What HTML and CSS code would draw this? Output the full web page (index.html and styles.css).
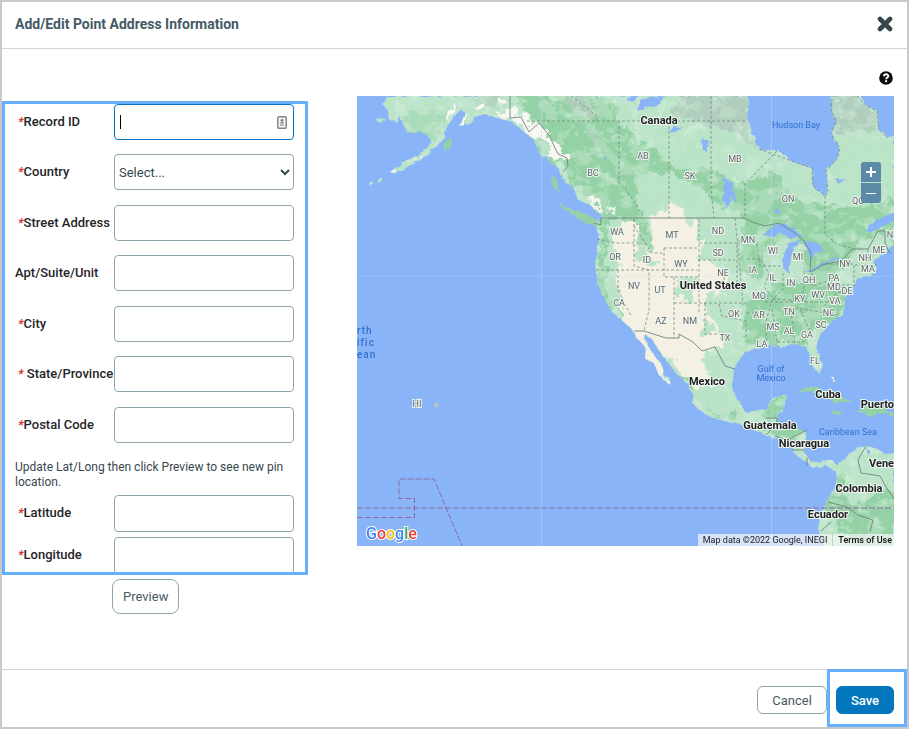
FILE: index.html
```html
<!DOCTYPE html>
<html lang="en">
<head>
<meta charset="utf-8">
<title>Add/Edit Point Address Information</title>
<link rel="stylesheet" href="styles.css">
</head>
<body>
<div class="dialog" role="dialog" aria-labelledby="title">
  <header class="dialog-header">
    <h1 id="title">Add/Edit Point Address Information</h1>
    <button class="icon-button" type="button" aria-label="Close">
      <svg width="16" height="16" viewBox="0 0 16 16"><path d="M3 3L13 13M13 3L3 13" stroke="#37474f" stroke-width="4.6" stroke-linecap="round"/></svg>
    </button>
  </header>
  <main class="dialog-body">
    <div class="help-row">
      <button class="icon-button" type="button" aria-label="Help">
        <svg width="14" height="14" viewBox="0 0 14 14"><circle cx="7" cy="7" r="6.8" fill="#0b0b0b"/><path d="M4.8 5.3C5 3.8 6 3.3 7.1 3.3C8.5 3.3 9.4 4.2 9.3 5.2C9.2 6.6 7.2 6.6 7.1 8.3" fill="none" stroke="#fff" stroke-width="1.9"/><rect x="6.1" y="9.2" width="2" height="1.9" fill="#fff"/></svg>
      </button>
    </div>
    <div class="content">
      <form class="form-column">
        <div class="fields">
          <div class="address">
            <div class="row">
              <label class="required" for="record"><i>*</i>Record ID</label>
              <div class="control">
                <input class="focused" id="record" type="text">
                <span class="caret"></span>
                <svg class="contact-icon" width="10" height="13" viewBox="0 0 10 13"><rect x=".75" y=".75" width="8.5" height="11.5" rx="1" fill="#f4f4f4" stroke="#858585" stroke-width="1.5"/><circle cx="5" cy="4.2" r="1.3" fill="#777"/><path d="M2.8 7.2Q5 4.4 7.2 7.2ZM3 8.6H7V9.6H3Z" fill="#777"/></svg>
              </div>
            </div>
            <div class="row">
              <label class="required" for="country"><i>*</i>Country</label>
              <select id="country"><option>Select...</option></select>
            </div>
            <div class="row">
              <label class="required" for="street"><i>*</i>Street Address</label>
              <input id="street" type="text">
            </div>
            <div class="row">
              <label for="unit">Apt/Suite/Unit</label>
              <input id="unit" type="text">
            </div>
            <div class="row">
              <label class="required" for="city"><i>*</i>City</label>
              <input id="city" type="text">
            </div>
            <div class="row">
              <label class="required" for="state"><i>*</i> State/Province</label>
              <input id="state" type="text">
            </div>
            <div class="row">
              <label class="required" for="postal"><i>*</i>Postal Code</label>
              <input id="postal" type="text">
            </div>
          </div>
          <p class="note">Update Lat/Long then click Preview to see new pin location.</p>
          <div class="coordinates">
            <div class="row">
              <label class="required" for="lat"><i>*</i>Latitude</label>
              <input id="lat" type="text">
            </div>
            <div class="row">
              <label class="required" for="lng"><i>*</i>Longitude</label>
              <input id="lng" type="text">
            </div>
          </div>
        </div>
        <button class="button preview" type="button">Preview</button>
      </form>
      <div class="map">
        <svg class="map-canvas" viewBox="0 0 537 450" role="img" aria-label="Map of North America">
          <defs>
            <path id="main" d="M30 0L26 9L31 15L32 24L40 25L42 20L48 30L49 37L62 36L72 40L74 46L68 54L60 60L50 64L42 71L32 76L40 77L52 70L62 65L70 58L80 50L88 42L87 36L93 26L100 17L104 13L108 18L103 30L112 28L120 20L128 18L140 22L152 25L160 30L167 36L176 42L180 52L185 60L190 62L197 67L204 77L207 85L215 91L222 104L234 110L243 120L238 127L242 142L240 155L239 176L242 190L248 203L253 214L261 221L268 227L275 233L281 243L289 252L288 262L297 267L302 279L313 289L314 286L308 279L305 270L299 262L292 252L287 243L288 238L295 243L304 257L316 273L330 287L337 298L335 307L350 320L374 327L390 331L404 337L417 342L434 347L437 358L450 366L454 371L464 373L467 368L479 375L480 388L471 404L464 418L461 432L466 450H537V358L528 357L517 352L509 350L500 352L489 361L480 370L475 364L464 365L455 367L447 356L449 336L434 330L420 328L421 318L425 314L430 299L416 302L409 314L390 317L382 307L375 292L377 272L387 257L400 252L414 249L424 251L437 248L449 251L452 260L457 273L463 278L465 268L459 250L463 238L474 226L485 218L488 210L488 202L497 188L500 181L512 181L519 174L517 166L525 159L537 149V0Z"/>
            <clipPath id="land"><use href="#main"/></clipPath>
            <filter id="rough" x="-5%" y="-5%" width="110%" height="110%"><feTurbulence type="fractalNoise" baseFrequency=".09" numOctaves="4" seed="4" result="n"/><feDisplacementMap in="SourceGraphic" in2="n" scale="18" xChannelSelector="R" yChannelSelector="G"/></filter>
            <filter id="coast"><feTurbulence type="fractalNoise" baseFrequency=".16" numOctaves="3" seed="8" result="n"/><feDisplacementMap in="SourceGraphic" in2="n" scale="5" xChannelSelector="R" yChannelSelector="G"/></filter>
            <filter id="mottle" x="0" y="0" width="100%" height="100%"><feTurbulence type="fractalNoise" baseFrequency=".055 .075" numOctaves="5" seed="12"/><feColorMatrix values="0 0 0 0 .57  0 0 0 0 .81  0 0 0 0 .65  14 0 0 0 -7.3"/></filter>
            <filter id="light" x="0" y="0" width="100%" height="100%"><feTurbulence type="fractalNoise" baseFrequency=".08" numOctaves="4" seed="31"/><feColorMatrix values="0 0 0 0 .75  0 0 0 0 .9  0 0 0 0 .8  14 0 0 0 -8.2"/></filter>
          </defs>
          <rect width="537" height="450" fill="#8ab4f8"/>
          <g filter="url(#coast)">
            <use href="#main" fill="#bbe3c8"/>
            <g fill="#94d2a5">
              <path d="M198 107L212 112L232 120L241 126L236 130L220 122ZM194 80L201 85L203 97L196 91ZM177 42L184 49L186 58L179 51ZM188 54L196 61L201 72L194 68Z"/>
              <path d="M85 51L94 41L95 50L88 55Z"/><path d="M18 23L24 21L28 24L23 27Z" fill="#bbe3c8"/>
              <path d="M12 89L16 86M20 85L24 83" stroke="#bbe3c8" stroke-width="2"/>
              <path d="M441 296L453 290L465 293L482 300L496 305L478 307L467 300L455 295L444 297ZM476 315L485 316L484 319L477 318ZM499 316L510 308L525 310L532 317L520 318L510 321L507 316ZM532 316H537V319H532Z"/>
            </g>
            <path d="M474 279L478 284L476 286Z" fill="#e9eee2"/>
          </g>
          <g clip-path="url(#land)">
            <g filter="url(#rough)" fill="#94d2a5">
              <path d="M158 0H252L262 18L270 40L300 51L326 68L350 75L386 85L388 118L358 109L335 87L307 76L287 78L278 99L288 123L297 145L288 158L264 120L242 137L233 107L190 51Z"/>
              <path d="M386 91L415 75L430 89L445 105L480 112L515 109L537 98V149L524 134L500 151L473 189L455 190L450 180L445 151L430 142L412 148L402 184L383 174L384 126Z"/>
              <path d="M243 120L253 125L248 190L269 222L285 232L264 225L239 190ZM424 184L450 187L472 187L490 205L477 225L455 238L448 250L430 248L414 248L405 243L396 252L385 241L389 209Z"/>
              <path d="M308 247L333 265L350 291L364 304L382 326L350 314L331 289ZM414 302L430 300L424 317L449 335L440 350L416 339L404 329ZM490 372L485 396L498 410L537 389V450H490L477 425L464 413Z"/>
              <path d="M40 17L91 15L86 37L67 55L60 55L58 38Z" opacity=".45"/>
            </g>
            <g filter="url(#rough)" fill="#b1cdbd">
              <path d="M320 0H395L392 36L403 52L375 39L350 27L316 20ZM475 0H501L520 17L521 35L490 38L474 32Z"/>
              <path d="M110 0H145L138 10L120 12ZM210 0H226L242 18L232 24L214 12ZM231 34L242 37L240 46L231 42Z" opacity=".8"/>
            </g>
            <rect width="537" height="450" filter="url(#mottle)" opacity=".4"/>
            <rect width="537" height="450" filter="url(#light)" opacity=".3"/>
            <g filter="url(#rough)" fill="#f4f0e4">
              <path d="M265 125L281 126L284 149L295 153L298 141L294 124L303 114L320 107L331 120L343 143L344 161L371 180L364 202L350 198L350 218L362 233L365 252L351 254L345 266L359 294L350 301L324 275L304 255L292 242L304 268L316 292L302 284L285 257L269 229L257 210L266 211L260 192L263 169L256 146Z"/>
              <path d="M338 264L352 280L360 296L351 298ZM261 213L274 218L267 225Z"/>
            </g>
            <path filter="url(#rough)" d="M300 55H386V80L359 69L320 75ZM282 77L325 84L355 108L356 121L330 121L318 107L300 110L292 121H288L276 96ZM340 124L380 124L380 163L350 164ZM350 197L378 202L379 235L362 240ZM400 60L454 75L462 99L443 96L421 77ZM480 53L535 42L537 89L500 105L476 110Z" fill="#bbe3c8" opacity=".86"/>
            <g filter="url(#rough)" fill="#f8f7f3">
              <path d="M136 15L151 11L165 16L169 23L186 30L198 47L206 58L212 61L209 66L193 55L185 40L174 42L164 28L147 23ZM115 11L127 9L130 14L119 14ZM102 26L112 17L107 29L100 34ZM91 12L99 8L96 18L90 27ZM140 2L150 3L145 9Z"/>
              <path d="M229 98L242 106L247 114L231 107ZM250 110L258 114L255 117ZM56 61L62 61L57 65ZM34 75L40 73L35 78Z" opacity=".9"/>
            </g>
            <g filter="url(#rough)" fill="#bbe3c8"><path d="M280 147L292 155L303 167L289 168L281 162ZM322 184L338 183L340 204L326 208L320 198ZM255 187L264 196L257 208L251 199ZM345 222L359 233L348 240ZM354 276L368 292L354 287ZM332 290L354 290L381 310L367 319L348 312Z"/></g>
          </g>
          <g fill="#8ab4f8" filter="url(#coast)">
            <path d="M392 -3L390 17L395 37L402 53L420 55L440 67L455 72L456 90L467 100L471 97L469 75L480 63L483 52L474 38L479 25L474 13L475 -3ZM500 -3L510 10L520 15L522 33L530 42L540 38V-3ZM540 115L519 124L506 135L514 136L540 124Z"/>
            <path d="M406 138L421 127L437 132L445 141L433 142L424 137L415 141ZM444 145L432 147L427 158L426 171L432 177L434 161L438 151ZM445 144L461 147L467 155L457 158L455 165L449 151ZM449 176L468 166L473 167L455 176ZM468 165L484 161L485 164L470 166Z"/>
            <path d="M367 83L375 86L380 107L374 101L371 112L365 105L367 95ZM279 15L285 3L306 0L302 8L285 13ZM346 42L351 46L349 57L345 53ZM311 35L317 30L326 32L316 37ZM420 113L424 118L418 118ZM479 83L490 84L480 87Z"/>
            <path d="M270 2L282 -3L275 6ZM246 59L252 66L247 63ZM236 113L245 120L244 126L240 121ZM509 353L514 355L511 359Z"/>
          </g>
          <path d="M479 1L483 4L481 8ZM482 63L484 66L481 68Z" fill="#bbe3c8"/>
          <path d="M78 306L83 309L79 312L77 309ZM66 299H69V300H67Z" fill="#b9c1c8"/>
          <g fill="none" stroke="#c8d8eb" stroke-opacity=".5"><path d="M184.500 0V450M414.500 0V450"/><path d="M0 180.500H537" stroke-opacity=".25"/></g>
          <g fill="none" stroke="#70857a" stroke-width=".9">
            <path d="M153 0V22L164 21L172 36L182 27L192 39L201 58L210 62L211 70L206 76M237 127L244 129V122H388L395 126L408 130L422 127L438 137L447 145L454 157L453 176L468 168L485 165L495 153H511L521 135H528V147L533 158"/>
            <path d="M277 235H287L309 242H322V238L336 246L345 255L358 251L368 270L378 273M409 322H420V328L409 339M418 340L430 344L450 334M435 354H447M450 362V370M509 350L501 364L504 377L523 380L529 391L537 403M471 406L490 411L501 419L516 424L513 436M474 426L464 435"/>
            <g stroke-dasharray="3 2" stroke-opacity=".8"><path d="M170 25H390M262 25V87L268 92L286 120M312 25V122M354 0V92L357 122M214 0L240 20V25M420 55L388 88V122M402 53L440 67L455 72L456 90L468 100L471 97L469 75L480 63L483 52L474 38L479 25L474 13L475 0M468 100V138L480 148L494 152M500 0L510 10L520 15L522 33L530 42"/>
            <path d="M240 143L258 147H277M239 174H340M261 174V194L274 220M277 123V170L292 174V214L287 235M277 130L288 147L295 157H307M307 152H342M307 152V181H342M317 181V242M342 123V218M342 147H380V190H367V181M341 164H378M378 122L382 163L386 209M317 207H390M348 207V238H370M362 208L365 220L389 225V241M390 163H404L412 178L407 191L416 202L409 225V248M400 148L403 170H425M426 177V193L416 203L450 205M390 217H410M408 206H480M415 213L420 247M434 215L438 247M420 246H447M443 214L455 239M438 212L482 219M447 175V195L432 206M455 177V190L475 184M463 168H497V190L479 198L466 211M470 189H492M511 153V175M498 169H520"/></g>
          </g>
          <g fill="none" stroke="#8c6aa0" stroke-dasharray="6 2"><path d="M0 412H537"/><path d="M0 421.500H57.500V402.500H42V383H77L105 450"/></g>
          <g class="region-labels">
            <text x="286" y="63">AB</text><text x="236" y="80">BC</text><text x="333" y="83">SK</text><text x="378" y="66">MB</text><text x="431" y="106">ON</text><text x="501" y="108">QC</text>
            <text x="260" y="139">WA</text><text x="315" y="142">MT</text><text x="361" y="138">ND</text><text x="391" y="147">MN</text><text x="416" y="158">WI</text><text x="441" y="164">MI</text><text x="258" y="164">OR</text><text x="290" y="167">ID</text><text x="324" y="171">WY</text><text x="361" y="160">SD</text><text x="366" y="180">NE</text><text x="396" y="177">IA</text><text x="416" y="185">IL</text><text x="434" y="190">IN</text><text x="452" y="187">OH</text><text x="477" y="185">PA</text><text x="477" y="194">MD</text><text x="490" y="198">DE</text><text x="488" y="171">NY</text><text x="508" y="165">NH</text><text x="511" y="176">MA</text><text x="522" y="157">ME</text><text x="533" y="142">N</text>
            <text x="277" y="193">NV</text><text x="303" y="197">UT</text><text x="262" y="210">CA</text><text x="402" y="203">MO</text><text x="443" y="206">KY</text><text x="461" y="202">WV</text><text x="478" y="208">VA</text><text x="304" y="228">AZ</text><text x="333" y="228">NM</text><text x="377" y="221">OK</text><text x="402" y="222">AR</text><text x="432" y="219">TN</text><text x="472" y="220">NC</text><text x="416" y="234">MS</text><text x="432" y="238">AL</text><text x="450" y="242">GA</text><text x="464" y="232">SC</text><text x="368" y="245">TX</text><text x="405" y="251">LA</text><text x="458" y="268">FL</text><text x="60" y="311">HI</text>
          </g>
          <g class="country-labels">
            <text x="302" y="28">Canada</text><text x="356" y="193">United States</text><text x="350" y="289">Mexico</text><text x="471" y="302">Cuba</text><text x="537" y="312" text-anchor="end">Puerto</text><text x="413" y="333">Guatemala</text><text x="447" y="351">Nicaragua</text><text x="537" y="371" text-anchor="end">Vene</text><text x="502" y="396">Colombia</text><text x="471" y="422">Ecuador</text>
          </g>
          <g class="water-labels"><text x="439" y="32">Hudson Bay</text><text x="414" y="276">Gulf of</text><text x="414" y="285">Mexico</text><text x="491" y="339">Caribbean Sea</text></g>
          <g class="ocean-label"><text x="0" y="238">rth</text><text x="0" y="250">ific</text><text x="0" y="262">ean</text></g>
          <text class="map-brand" x="9" y="443"><tspan fill="#4285f4">G</tspan><tspan fill="#ea4335">o</tspan><tspan fill="#fbbc04">o</tspan><tspan fill="#4285f4">g</tspan><tspan fill="#34a853">l</tspan><tspan fill="#ea4335">e</tspan></text>
        </svg>
        <div class="zoom">
          <button type="button" aria-label="Zoom in"><svg width="12" height="12" viewBox="0 0 12 12"><path d="M6 1V11M1 6H11" stroke="#fff" stroke-width="2"/></svg></button>
          <button type="button" aria-label="Zoom out"><svg width="12" height="12" viewBox="0 0 12 12"><path d="M1 6.500H11" stroke="#fff"/></svg></button>
        </div>
        <div class="attribution"><span>Map data ©2022 Google, INEGI</span><a href="#terms">Terms of Use</a></div>
      </div>
    </div>
  </main>
  <footer class="dialog-footer">
    <button class="button" type="button">Cancel</button>
    <div class="save-box"><button class="button primary" type="button">Save</button></div>
  </footer>
</div>
</body>
</html>
```
FILE: styles.css
```css
* { box-sizing: border-box; }
body { margin: 0; font: 13px/15px Roboto, sans-serif; color: #1f2528; background: #fff; }
button, input, select { font: inherit; }
.dialog { display: flex; flex-direction: column; min-height: 100vh; border: 2px solid #c9c9c9; }
.dialog-header { display: flex; justify-content: space-between; align-items: center; padding: 12px 14px 14px 13px; border-bottom: 1px solid #cbd5dc; }
h1 { margin: 0; font-size: 14px; line-height: 20px; font-weight: 700; color: #455a64; }
.icon-button { display: block; padding: 0; border: 0; background: none; }
.icon-button svg { display: block; }
.dialog-body { flex: 1; }
.help-row { display: flex; justify-content: flex-end; padding: 22px 14px 11px; }
.content { display: flex; align-items: flex-start; gap: 49px; padding-right: 13px; }
.form-column { flex: 0 0 306px; margin-top: 5px; }
.fields { position: relative; padding: 3px 8px 1px 13px; }
.fields::after { content: ""; position: absolute; inset: 0; border: 3px solid #66b0ff; pointer-events: none; }
.row { display: grid; grid-template-columns: 99px 180px; align-items: center; }
.address .row { margin-bottom: 14px; }
.address .row:nth-child(even) { margin-bottom: 15px; }
label { padding-bottom: 2px; font-weight: 500; white-space: nowrap; }
.required { padding-left: 3px; }
.required i { color: #d32f2f; }
input, select { display: block; width: 100%; height: 36px; border: 1px solid #90a4ae; border-radius: 4px; background: #fff; color: #37474f; }
select { padding: 0; }
.control { position: relative; }
.focused { border-color: #0277bd; }
.caret { position: absolute; left: 6px; top: 11px; width: 1px; height: 14px; background: #000; }
.contact-icon { position: absolute; right: 7px; top: 12px; }
.note { margin: 17px 0 5px; font-size: 12px; color: #37474f; }
.coordinates { display: grid; gap: 5px; }
.coordinates input { height: 37px; }
.button { display: block; height: 28px; padding: 0 14px; border: 1px solid #90a4ae; border-radius: 6px; background: #fff; color: #455a64; }
.preview { height: 35px; margin: 4px 0 0 110px; padding: 0 10px; border-radius: 8px; }
.map { flex: 1; position: relative; min-width: 0; }
.map-canvas { display: block; width: 100%; font-family: Roboto, sans-serif; text-anchor: middle; }
.map-canvas text { paint-order: stroke; }
.region-labels { font-size: 9px; fill: #5f6368; stroke: #eef6ee; stroke-width: 2px; }
.country-labels { font-size: 11px; font-weight: 700; fill: #202124; stroke: #eef6ee; stroke-width: 2px; }
.water-labels { font-size: 9px; fill: #3070ce; }
.ocean-label { font-size: 10px; font-weight: 500; letter-spacing: 1px; fill: #3070ce; text-anchor: start; }
.map-canvas .map-brand { font-size: 16px; font-weight: 500; text-anchor: start; stroke: #fff; stroke-width: 2px; }
.zoom { position: absolute; top: 66px; right: 13px; display: grid; gap: 1px; border-radius: 3px; overflow: hidden; }
.zoom button { display: grid; place-items: center; width: 20px; height: 20px; padding: 0; border: 0; background: rgba(65, 112, 158, .78); }
.attribution { position: absolute; right: 0; bottom: 0; display: flex; font-size: 9px; line-height: 12px; background: rgba(245, 245, 245, .72); color: #222; }
.attribution span, .attribution a { padding: 0 2px 0 5px; white-space: nowrap; }
.attribution a { margin-left: 3px; border-left: 1px solid #b3dcc2; color: #111; font-weight: 500; text-decoration: none; }
.dialog-footer { display: flex; justify-content: flex-end; gap: 9px; padding: 16px 13px 13px; border-top: 1px solid #cbd5dc; }
.save-box { position: relative; }
.save-box::after { content: ""; position: absolute; inset: -17px -13px -13px -9px; border: 3px solid #66b0ff; pointer-events: none; }
.primary { border-color: #0277bd; background: #0277bd; color: #fff; font-weight: 500; }
```
